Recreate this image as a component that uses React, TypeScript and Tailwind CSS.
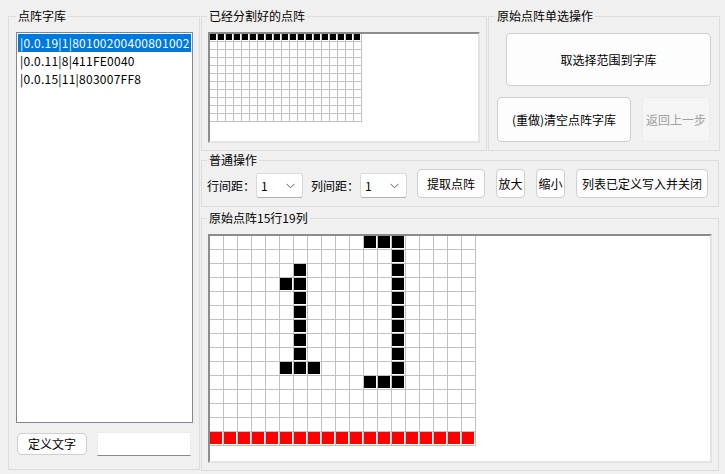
import React from "react";

type Cell = 0 | 1 | 2;

// 15 x 19 source matrix: 1 = black, 2 = red (row marker)
function buildSource(): Cell[][] {
  const g: Cell[][] = Array.from({ length: 15 }, () => Array(19).fill(0) as Cell[]);
  const on = (r: number, c: number) => (g[r][c] = 1);
  [11, 12, 13].forEach((c) => on(0, c));
  for (let r = 1; r <= 10; r++) on(r, 13);
  for (let r = 2; r <= 9; r++) on(r, 6);
  on(3, 5);
  on(9, 5);
  on(9, 7);
  [11, 12].forEach((c) => on(10, c));
  for (let c = 0; c < 19; c++) g[14][c] = 2;
  return g;
}

function buildSplit(): Cell[][] {
  return Array.from({ length: 11 }, (_, r) => Array(19).fill(r === 0 ? 1 : 0) as Cell[]);
}

const sourceGrid = buildSource();
const splitGrid = buildSplit();

function GroupBox({
  title,
  className,
  bodyClass,
  legendClass = "ml-[5px] px-[2px]",
  children,
}: {
  title: string;
  className?: string;
  bodyClass?: string;
  legendClass?: string;
  children: React.ReactNode;
}) {
  return (
    <fieldset className={`border border-[#dcdcdc] ${className ?? ""}`}>
      <legend className={`text-[12px] leading-[16px] ${legendClass}`}>{title}</legend>
      <div className={bodyClass}>{children}</div>
    </fieldset>
  );
}

function Btn({
  children,
  className,
  disabled,
}: {
  children: React.ReactNode;
  className?: string;
  disabled?: boolean;
}) {
  return (
    <button
      disabled={disabled}
      className={`shrink-0 rounded-[4px] border text-[12px] leading-[16px] ${
        disabled
          ? "border-[#ebebeb] bg-[#f5f5f5] text-[#a0a0a0]"
          : "border-[#d0d0d0] bg-[#fdfdfd] text-black"
      } ${className ?? ""}`}
    >
      {children}
    </button>
  );
}

function Combo() {
  return (
    <div className="mt-[4px] flex h-[25px] w-[47px] shrink-0 items-center justify-between rounded-[3px] border border-[#d9d9d9] border-b-[#b0b0b0] bg-white pl-[4px] pr-[7px] text-[12px]">
      <span>1</span>
      <svg width="9" height="6" viewBox="0 0 9 6" fill="none">
        <path d="M0.5 0.8 L4.5 4.8 L8.5 0.8" stroke="#606060" strokeWidth="1" />
      </svg>
    </div>
  );
}

function DotGrid({ data, pitch }: { data: Cell[][]; pitch: 8 | 14 }) {
  const big = pitch === 14;
  return (
    <div className={big ? "grid grid-cols-[repeat(19,14px)]" : "grid grid-cols-[repeat(19,8px)]"}>
      {data.flatMap((row, r) =>
        row.map((v, c) => (
          <div
            key={`${r}-${c}`}
            className={`${big ? "h-[14px] w-[14px]" : "h-[8px] w-[8px]"} border-r border-b border-[#c0c0c0] bg-white`}
          >
            {v !== 0 && (
              <div
                className={`${big ? "h-[12px] w-[12px]" : "h-[6px] w-[6px]"} ${
                  v === 1 ? "bg-black" : "bg-[#ff0000]"
                }`}
              />
            )}
          </div>
        ))
      )}
    </div>
  );
}

const sunken =
  "border-2 border-t-[#8c8c8c] border-l-[#8c8c8c] border-r-[#e3e3e3] border-b-[#e3e3e3] bg-white overflow-hidden";

export default function App() {
  const items = ["|0.0.19|1|80100200400801002", "|0.0.11|8|411FE0040", "|0.0.15|11|803007FF8"];

  return (
    <div className="flex h-[474px] w-[725px] overflow-hidden bg-[#f0f0f0] font-['Noto_Sans_CJK_SC',sans-serif] text-black">
      {/* Left: library list */}
      <GroupBox
        title="点阵字库"
        legendClass="ml-[7px] px-[2px]"
        className="mt-[8px] ml-[8px] h-[462px] w-[192px] shrink-0"
        bodyClass="pl-[7px]"
      >
        <div className="mt-[8px] h-[391px] w-[177px] border border-[#828790] bg-white p-px">
          {items.map((t, i) => (
            <div
              key={t}
              className={`h-[18px] px-[2px] text-[12px] leading-[18px] tracking-[0.25px] whitespace-nowrap ${
                i === 0 ? "bg-[#0078d7] text-white" : ""
              }`}
            >
              {t}
            </div>
          ))}
        </div>
        <div className="mt-[9px] flex items-center">
          <Btn className="ml-px h-[22px] w-[70px]">定义文字</Btn>
          <div className="ml-[10px] h-[24px] w-[94px] border border-[#ececec] border-b-[#8a8a8a] bg-white" />
        </div>
      </GroupBox>

      {/* Right side */}
      <div className="ml-px flex w-[519px] shrink-0 flex-col">
        <div className="mt-[8px] flex h-[143px]">
          <GroupBox title="已经分割好的点阵" className="h-[143px] w-[286px] shrink-0" bodyClass="pl-[6px]">
            <div className={`mt-[8px] h-[111px] w-[272px] ${sunken}`}>
              <DotGrid data={splitGrid} pitch={8} />
            </div>
          </GroupBox>
          <GroupBox
            title="原始点阵单选操作"
            legendClass="ml-[6px] px-[2px]"
            className="ml-px h-[143px] w-[232px] shrink-0"
            bodyClass="flex flex-col"
          >
            <Btn className="mt-[9px] ml-[17px] h-[53px] w-[205px]">取选择范围到字库</Btn>
            <div className="mt-[11px] ml-[8px] flex gap-[11px]">
              <Btn className="h-[45px] w-[134px]">(重做)清空点阵字库</Btn>
              <Btn disabled className="h-[45px] w-[68px]">
                返回上一步
              </Btn>
            </div>
          </GroupBox>
        </div>

        <GroupBox
          title="普通操作"
          className="mt-px h-[55px] w-[518px]"
          bodyClass="mt-px flex items-center pl-[5px] text-[12px] leading-[16px]"
        >
          <span className="mt-[4px] w-[48px] shrink-0">行间距：</span>
          <div className="ml-px">
            <Combo />
          </div>
          <span className="mt-[4px] ml-[8px] w-[48px] shrink-0">列间距：</span>
          <div className="ml-px">
            <Combo />
          </div>
          <Btn className="ml-[10px] h-[29px] w-[68px]">提取点阵</Btn>
          <Btn className="ml-[11px] h-[29px] w-[29px]">放大</Btn>
          <Btn className="ml-[11px] h-[29px] w-[29px]">缩小</Btn>
          <Btn className="ml-[11px] h-[29px] w-[132px]">列表已定义写入并关闭</Btn>
        </GroupBox>

        <GroupBox title="原始点阵15行19列" className="mt-[3px] h-[261px] w-[518px]" bodyClass="pl-[6px]">
          <div className={`mt-[8px] h-[229px] w-[504px] ${sunken}`}>
            <DotGrid data={sourceGrid} pitch={14} />
          </div>
        </GroupBox>
      </div>
    </div>
  );
}
